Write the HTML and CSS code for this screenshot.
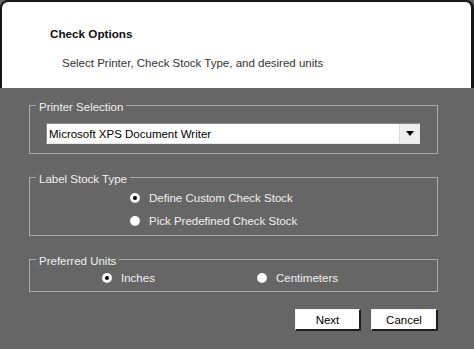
FILE: index.html
```html
<!DOCTYPE html>
<html>
<head>
<meta charset="utf-8">
<link rel="stylesheet" href="styles.css">
</head>
<body>
<div class="dialog">
  <header class="header">
    <div class="title">Check Options</div>
    <div class="subtitle">Select Printer, Check Stock Type, and desired units</div>
  </header>
  <main class="body">
    <fieldset class="group group-printer">
      <legend>Printer Selection</legend>
      <div class="select">
        <span class="select-text">Microsoft XPS Document Writer</span>
        <span class="select-btn"><span class="tri"></span></span>
      </div>
    </fieldset>
    <fieldset class="group group-stock">
      <legend>Label Stock Type</legend>
      <div class="radio-col">
        <div class="radio-row"><span class="radio checked"></span><span class="rlabel">Define Custom Check Stock</span></div>
        <div class="radio-row"><span class="radio"></span><span class="rlabel">Pick Predefined Check Stock</span></div>
      </div>
    </fieldset>
    <fieldset class="group group-units">
      <legend>Preferred Units</legend>
      <div class="units-row">
        <div class="radio-row unit"><span class="radio checked"></span><span class="rlabel">Inches</span></div>
        <div class="radio-row unit"><span class="radio"></span><span class="rlabel">Centimeters</span></div>
      </div>
    </fieldset>
    <div class="buttons">
      <button class="btn btn-next">Next</button>
      <button class="btn btn-cancel">Cancel</button>
    </div>
  </main>
</div>
</body>
</html>
```

FILE: styles.css
```css
html, body {
  margin: 0;
  padding: 0;
  background: #666666;
  width: 474px;
  height: 349px;
  overflow: hidden;
  font-family: "Liberation Sans", Arial, sans-serif;
  font-size: 11.5px;
}

.dialog {
  display: flex;
  flex-direction: column;
  width: 474px;
  height: 349px;
}

.header {
  box-sizing: border-box;
  height: 88px;
  background: #ffffff;
  border-top: 2px solid #161616;
  border-left: 2px solid #161616;
  border-right: 3px solid #161616;
  border-radius: 8px 8px 0 0;
  padding: 25px 0 0 48px;
  display: flex;
  flex-direction: column;
}

.title {
  font-weight: bold;
  font-size: 11.7px;
  line-height: 14px;
  color: #111111;
}

.subtitle {
  margin-top: 15px;
  margin-left: 12px;
  line-height: 14px;
  color: #333333;
}

.body {
  display: flex;
  flex-direction: column;
  padding-left: 29px;
}

.group {
  box-sizing: border-box;
  width: 409px;
  margin: 0;
  padding: 0;
  border: 1px solid #ababab;
  min-inline-size: 0;
}

.group legend {
  margin-left: 6px;
  padding: 3px 3px 0 3px;
  line-height: 14px;
  color: #f0f0f0;
}

.group-printer { margin-top: 9px; padding-bottom: 9px; }
.group-stock { margin-top: 15px; padding-bottom: 6px; }
.group-units { margin-top: 15px; padding-bottom: 5px; }

.select {
  box-sizing: border-box;
  margin-top: 9px;
  margin-left: 16px;
  width: 374px;
  height: 21px;
  background: #ffffff;
  border-top: 1px solid #8a8a8a;
  border-left: 1px solid #8a8a8a;
  border-right: 1px solid #e8e8e8;
  border-bottom: 1px solid #e8e8e8;
  display: flex;
  align-items: center;
  justify-content: space-between;
}

.select-text {
  padding-left: 2px;
  color: #000000;
  line-height: 14px;
}

.select-btn {
  box-sizing: border-box;
  width: 20px;
  height: 19px;
  background: #efefef;
  border-left: 1px solid #dcdcdc;
  display: flex;
  align-items: center;
  justify-content: center;
}

.tri {
  width: 0;
  height: 0;
  border-left: 4px solid transparent;
  border-right: 4px solid transparent;
  border-top: 5px solid #000000;
}

.radio-col {
  display: flex;
  flex-direction: column;
  gap: 7px;
  margin-top: 4px;
  margin-left: 100px;
}

.radio-row {
  display: flex;
  align-items: center;
  height: 16px;
}

.radio {
  box-sizing: border-box;
  width: 10px;
  height: 10px;
  border-radius: 50%;
  background: radial-gradient(circle at 45% 40%, #ffffff 0%, #ffffff 45%, #e4e4e4 80%, #c8c8c8 100%);
  display: flex;
  align-items: center;
  justify-content: center;
}

.radio.checked::after {
  content: "";
  width: 4px;
  height: 4px;
  border-radius: 50%;
  background: #000000;
}

.rlabel {
  margin-left: 9px;
  color: #f0f0f0;
  line-height: 14px;
}

.units-row {
  display: flex;
  margin-top: 2px;
  margin-left: 72px;
}

.unit {
  width: 155px;
}

.buttons {
  display: flex;
  justify-content: flex-end;
  gap: 10px;
  width: 409px;
  margin-top: 17px;
}

.btn {
  box-sizing: border-box;
  height: 22px;
  padding: 0;
  background: #ffffff;
  border-top: 1px solid #f4f4f4;
  border-left: 1px solid #f4f4f4;
  border-right: 2px solid #1e1e1e;
  border-bottom: 2px solid #1e1e1e;
  font-family: "Liberation Sans", Arial, sans-serif;
  font-size: 11.5px;
  color: #000000;
}

.btn-next { width: 66px; }
.btn-cancel { width: 67px; }
```
